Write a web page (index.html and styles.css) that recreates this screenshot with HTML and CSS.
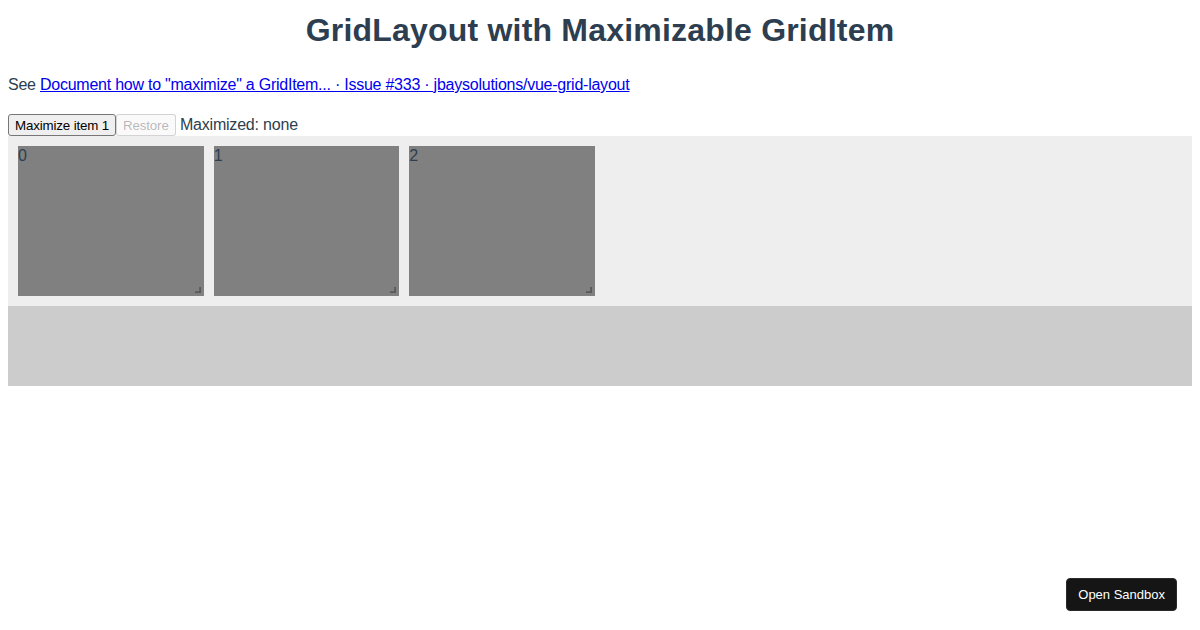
FILE: index.html
```html
<!DOCTYPE html>
<html lang="en">
<head>
<meta charset="utf-8">
<title>GridLayout with Maximizable GridItem</title>
<link rel="stylesheet" href="styles.css">
</head>
<body>
<div class="app">
  <h1 class="title">GridLayout with Maximizable GridItem</h1>
  <p class="see">See <a href="#">Document how to "maximize" a GridItem... · Issue #333 · jbaysolutions/vue-grid-layout</a></p>
  <div class="controls"><button class="btn">Maximize item 1</button><button class="btn" disabled>Restore</button> Maximized: none</div>
  <div class="grid">
    <div class="item">0<span class="handle"><svg width="6" height="6" viewBox="0 0 6 6"><path d="M6 6H0V4.2h4.2V0H6v6z" fill="#000" opacity=".302"/></svg></span></div>
    <div class="item">1<span class="handle"><svg width="6" height="6" viewBox="0 0 6 6"><path d="M6 6H0V4.2h4.2V0H6v6z" fill="#000" opacity=".302"/></svg></span></div>
    <div class="item">2<span class="handle"><svg width="6" height="6" viewBox="0 0 6 6"><path d="M6 6H0V4.2h4.2V0H6v6z" fill="#000" opacity=".302"/></svg></span></div>
  </div>
  <div class="footer-block"></div>
</div>
<button class="sandbox">Open Sandbox</button>
</body>
</html>
```

FILE: styles.css
```css
body {
  margin: 8px;
  background: #fff;
}
.app {
  font-family: "Liberation Sans", Arial, sans-serif;
  color: #2c3e50;
  font-size: 16px;
}
.title {
  font-size: 32px;
  font-weight: bold;
  text-align: center;
  letter-spacing: 0.2px;
  margin: 4px 0 0;
}
.see {
  margin: 27px 0 0;
  letter-spacing: -0.24px;
}
.see a {
  color: #0000ee;
}
.controls {
  margin-top: 20px;
  letter-spacing: -0.2px;
}
.btn {
  font-family: "Liberation Sans", Arial, sans-serif;
  font-size: 13.333px;
  letter-spacing: -0.15px;
  color: #000;
  background: #efefef;
  border: 1px solid #767676;
  border-radius: 3px;
  padding: 1px 6px;
  height: 22px;
  margin: 0;
}
.btn:disabled {
  color: rgba(16, 16, 16, 0.3);
  background: rgba(239, 239, 239, 0.3);
  border-color: rgba(118, 118, 118, 0.3);
}
.grid {
  background: #eee;
  display: grid;
  grid-template-columns: repeat(12, 1fr);
  grid-auto-rows: 30px;
  gap: 10px;
  padding: 10px;
}
.item {
  grid-column: span 2;
  grid-row: span 4;
  background: #808080;
  position: relative;
  line-height: 20px;
}
.handle {
  position: absolute;
  right: 3px;
  bottom: 3px;
  width: 6px;
  height: 6px;
  display: block;
}
.handle svg {
  display: block;
}
.footer-block {
  background: #ccc;
  height: 80px;
}
.sandbox {
  position: fixed;
  right: 23px;
  bottom: 19px;
  height: 33px;
  padding: 0 11px;
  background: #151515;
  color: #fff;
  border: 1px solid #2a2a2a;
  border-radius: 4px;
  font-family: "Liberation Sans", Arial, sans-serif;
  font-size: 13px;
}
```
